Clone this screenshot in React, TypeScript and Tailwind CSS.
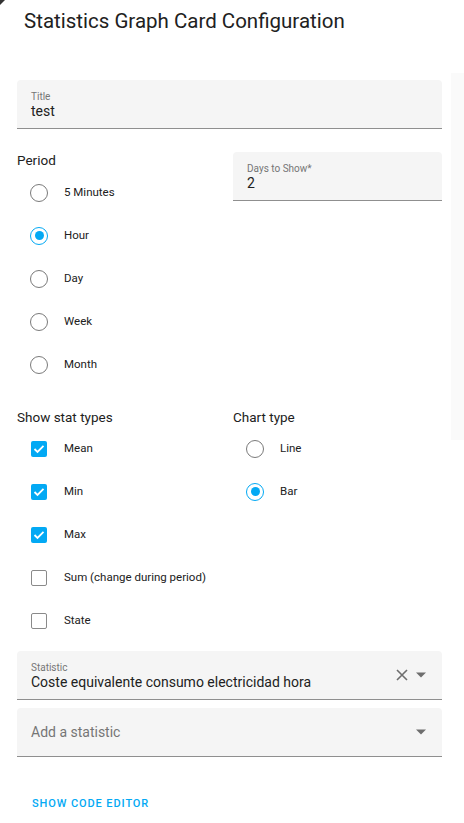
import React from 'react';

const BLUE = 'bg-[#03a9f4]';

function Field({
  label,
  value,
  placeholder,
  clearable,
  dropdown,
  className = '',
}: {
  label?: string;
  value?: string;
  placeholder?: string;
  clearable?: boolean;
  dropdown?: boolean;
  className?: string;
}) {
  return (
    <div
      className={`relative h-[49px] bg-[#f5f5f5] rounded-t-[4px] border-b border-[#8f8f8f] flex items-center pl-[14px] pr-[16px] ${className}`}
    >
      {label ? (
        <div className="flex-1 min-w-0 self-start pt-[11px] flex flex-col">
          <span className="text-[10px] leading-[12px] text-[#757575]">{label}</span>
          <span className="text-[14px] leading-[16px] text-[#212121]">{value}</span>
        </div>
      ) : (
        <div className="flex-1 min-w-0">
          <span className="text-[14px] leading-[16px] text-[#757575]">{placeholder}</span>
        </div>
      )}
      {clearable && (
        <svg width="14" height="14" viewBox="0 0 14 14" className="mr-[7px]">
          <path d="M2 2 L12 12 M12 2 L2 12" stroke="#6e6e6e" strokeWidth="1.6" fill="none" />
        </svg>
      )}
      {dropdown && (
        <svg width="10" height="6" viewBox="0 0 10 5">
          <path d="M0 0 L10 0 L5 5 Z" fill="#6e6e6e" />
        </svg>
      )}
    </div>
  );
}

function Radio({ label, checked }: { label: string; checked?: boolean }) {
  return (
    <div className="h-[43px] flex items-center">
      <div className="w-[44px] flex justify-center">
        <div
          className={`w-[18px] h-[18px] rounded-full border-[1.5px] flex items-center justify-center ${
            checked ? 'border-[#03a9f4]' : 'border-[#7a7a7a]'
          }`}
        >
          {checked && <div className={`w-[9px] h-[9px] rounded-full ${BLUE}`} />}
        </div>
      </div>
      <span className="ml-[3px] text-[11.5px] text-[#212121]">{label}</span>
    </div>
  );
}

function Check({ label, checked }: { label: string; checked?: boolean }) {
  return (
    <div className="h-[43px] flex items-center">
      <div className="w-[44px] flex justify-center">
        {checked ? (
          <div className={`w-[16px] h-[16px] rounded-[2px] ${BLUE} flex items-center justify-center`}>
            <svg width="12" height="10" viewBox="0 0 12 10">
              <path d="M1.5 5 L4.5 8 L10.5 1.8" stroke="#fff" strokeWidth="1.8" fill="none" />
            </svg>
          </div>
        ) : (
          <div className="w-[16px] h-[16px] rounded-[2px] border-[1.5px] border-[#8a8a8a]" />
        )}
      </div>
      <span className="ml-[3px] text-[11.5px] text-[#212121]">{label}</span>
    </div>
  );
}

export default function App() {
  return (
    <div
      className="relative w-[464px] h-[823px] bg-white overflow-hidden"
      style={{ fontFamily: 'Roboto, "Noto Sans", sans-serif' }}
    >
      <svg width="5" height="5" viewBox="0 0 5 5" className="absolute left-0 top-0">
        <path d="M0 0 L5 0 L0 5 Z" fill="#333" />
      </svg>
      <div className="absolute left-[451px] top-[73px] w-[13px] h-[367px] bg-[#fafafa]" />

      <div className="h-[80px] pt-[9px] pl-[24px]">
        <h1 className="text-[20.5px] leading-[24px] text-[#212121] font-normal">
          Statistics Graph Card Configuration
        </h1>
      </div>

      <div className="w-[425px] ml-[17px]">
        <Field label="Title" value="test" />

        <div className="flex mt-[23px]">
          <div className="w-[216px]">
            <div className="text-[13.5px] leading-[16px] text-[#212121]">Period</div>
            <div className="mt-[3px]">
              <Radio label="5 Minutes" />
              <Radio label="Hour" checked />
              <Radio label="Day" />
              <Radio label="Week" />
              <Radio label="Month" />
            </div>
          </div>
          <div className="flex-1">
            <Field label="Days to Show*" value="2" />
          </div>
        </div>

        <div className="flex mt-[23px]">
          <div className="w-[216px]">
            <div className="text-[13.5px] leading-[16px] text-[#212121]">Show stat types</div>
            <div className="mt-[2px]">
              <Check label="Mean" checked />
              <Check label="Min" checked />
              <Check label="Max" checked />
              <Check label="Sum (change during period)" />
              <Check label="State" />
            </div>
          </div>
          <div className="flex-1">
            <div className="text-[13.5px] leading-[16px] text-[#212121]">Chart type</div>
            <div className="mt-[2px]">
              <Radio label="Line" />
              <Radio label="Bar" checked />
            </div>
          </div>
        </div>

        <Field
          className="mt-[9px]"
          label="Statistic"
          value="Coste equivalente consumo electricidad hora"
          clearable
          dropdown
        />
        <Field className="mt-[8px]" placeholder="Add a statistic" dropdown />

        <div className="mt-[39px] pl-[15px] text-[11px] leading-[16px] font-medium tracking-[0.9px] text-[#03a9f4]">
          SHOW CODE EDITOR
        </div>
      </div>
    </div>
  );
}
